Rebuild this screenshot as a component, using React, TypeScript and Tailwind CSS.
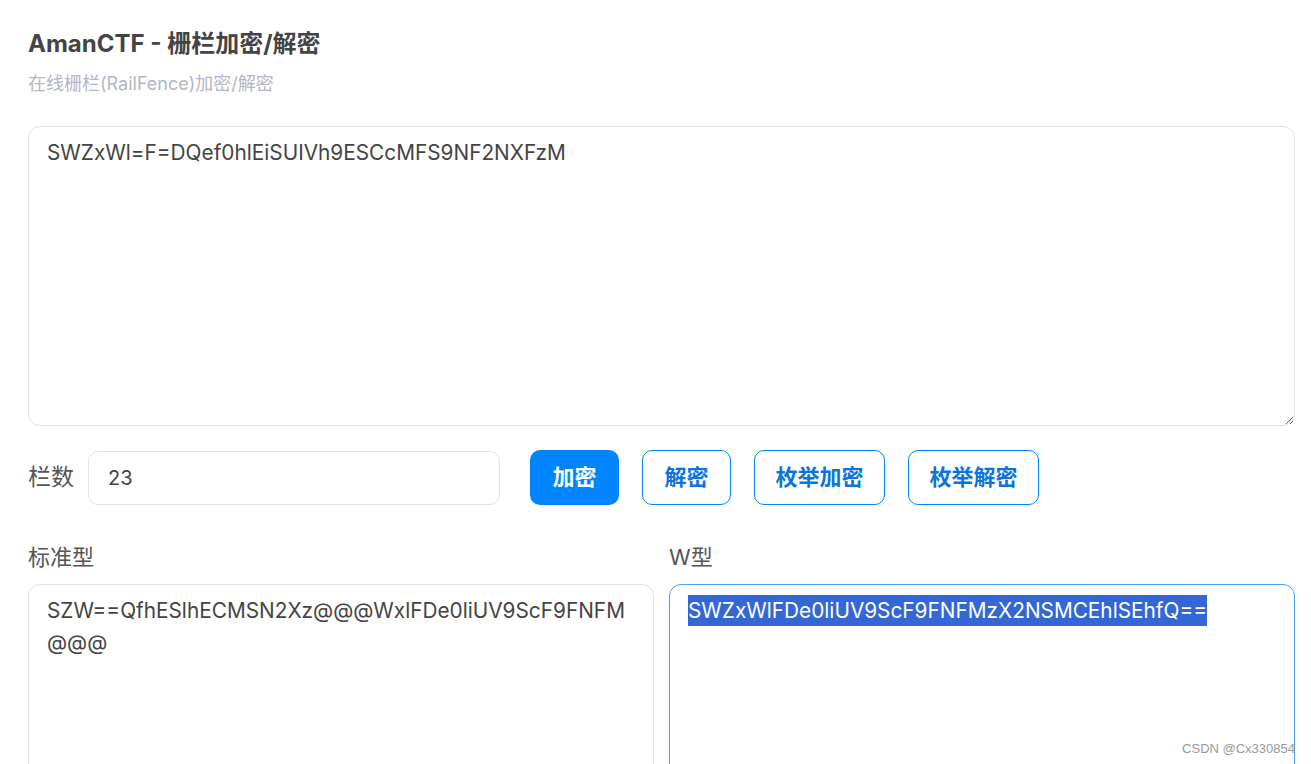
import { useState } from "react";

const FONT = { fontFamily: 'Inter, "Noto Sans CJK SC", sans-serif' };

export default function App() {
  const [input, setInput] = useState("SWZxWl=F=DQef0hlEiSUIVh9ESCcMFS9NF2NXFzM");
  const [rails, setRails] = useState("23");

  return (
    <div className="relative h-[764px] overflow-hidden bg-white pl-[28px] pr-[16px]" style={FONT}>
      <h1 className="mt-[28px] text-[24px] leading-[32px] font-bold text-[#444]">
        AmanCTF - 栅栏加密/解密
      </h1>
      <p className="mt-[12px] text-[18px] leading-[24px] text-[#b3b5c8]">
        在线栅栏(RailFence)加密/解密
      </p>

      <textarea
        value={input}
        onChange={(e) => setInput(e.target.value)}
        className="mt-[30px] block h-[300px] w-full rounded-[12px] border border-[#e2e2e2] px-[18px] py-[12px] text-[20.8px] leading-[28px] text-[#444] outline-none"
        style={FONT}
      />

      {/* controls */}
      <div className="mt-[24px] flex h-[55px] items-center">
        <span className="text-[23px] text-[#555]">栏数</span>
        <input
          value={rails}
          onChange={(e) => setRails(e.target.value)}
          className="ml-[14px] h-[54px] w-[412px] rounded-[10px] border border-[#e2e2e2] px-[19px] text-[20px] text-[#444] outline-none"
          style={FONT}
        />
        <div className="ml-[30px] flex gap-[23px]">
          <button className="h-[55px] w-[89px] rounded-[10px] bg-[#0084ff] text-[22px] font-bold text-white">
            加密
          </button>
          <button className="h-[55px] w-[89px] rounded-[10px] border border-[#0084ff] text-[22px] font-bold text-[#0a74e0]">
            解密
          </button>
          <button className="h-[55px] w-[131px] rounded-[10px] border border-[#0084ff] text-[22px] font-bold text-[#0a74e0]">
            枚举加密
          </button>
          <button className="h-[55px] w-[131px] rounded-[10px] border border-[#0084ff] text-[22px] font-bold text-[#0a74e0]">
            枚举解密
          </button>
        </div>
      </div>

      {/* results */}
      <div className="mt-[38px] grid grid-cols-2 gap-[15px]">
        <div>
          <div className="text-[22px] leading-[28px] text-[#555]">标准型</div>
          <textarea
            readOnly
            value="SZW==QfhESlhECMSN2Xz@@@WxlFDe0liUV9ScF9FNFM@@@"
            className="mt-[13px] block h-[300px] w-full resize-none rounded-[12px] border border-[#e2e2e2] px-[18px] py-[10px] text-[20.8px] leading-[32px] text-[#444] outline-none"
            style={FONT}
          />
        </div>
        <div>
          <div className="text-[22px] leading-[28px] text-[#555]">W型</div>
          <div className="mt-[13px] h-[300px] w-full rounded-[12px] border border-[#4a9cf5] px-[18px] py-[10px] text-[20.8px] leading-[32px] text-[#444]">
            <span className="bg-[#3367d6] py-[3px] text-white">SWZxWlFDe0liUV9ScF9FNFMzX2NSMCEhlSEhfQ==</span>
          </div>
        </div>
      </div>

      <div className="absolute bottom-[6px] right-[16px] text-[13px] text-[#999]" style={{ fontFamily: '"Liberation Sans", sans-serif' }}>
        CSDN @Cx330854
      </div>
    </div>
  );
}
